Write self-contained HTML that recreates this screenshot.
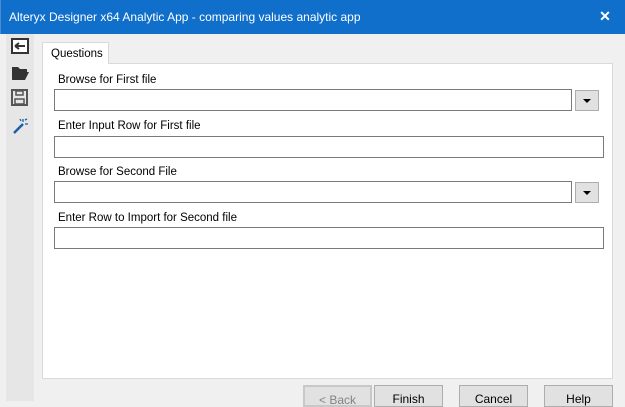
<!DOCTYPE html>
<html><head><style>
*{margin:0;padding:0;box-sizing:border-box}
body{width:625px;height:401px;overflow:hidden;background:#f0f0f0;font-family:"Liberation Sans",sans-serif;font-size:11px;color:#000;position:relative}
.title{position:absolute;left:0;top:0;width:625px;height:34px;background:#0f6fcb;color:#fff;font-size:12px;line-height:34px;padding-left:8px;border-left:1px solid #4a8ad0}
.x{position:absolute;right:0;top:0;width:40px;height:34px;text-align:center;font-weight:bold;font-size:14px;line-height:32px}
.side{position:absolute;left:6px;top:34px;width:28px;height:367px;background:#e6e6e6}
.ab{position:absolute}
.tab{position:absolute;left:42px;top:42px;width:67px;height:22px;background:#fff;border:1px solid #d9d9d9;border-bottom:none;padding:5px 0 0 8px;font-size:11.5px}
.panel{position:absolute;left:42px;top:63px;width:571px;height:316px;background:#fff;border:1px solid #d9d9d9}
.lbl{position:absolute;left:58px;font-size:11.5px}
.in{position:absolute;left:54px;height:22px;border:1px solid #7a7a7a;background:#fff}
.dd{position:absolute;left:575px;width:24px;height:21px;background:#e1e1e1;border:1px solid #adadad}
.dd:after{content:"";position:absolute;left:7px;top:8px;border-left:4px solid transparent;border-right:4px solid transparent;border-top:4px solid #000}
.btn{position:absolute;top:385px;width:69px;height:22px;background:#e1e1e1;border:1px solid #adadad;text-align:center;padding-top:6px;font-size:12px}
</style></head><body>
<div class="title">Alteryx Designer x64 Analytic App - comparing values analytic app<div class="x">✕</div></div>
<div class="side">
<svg class="ab" style="left:5px;top:4px" width="18" height="16"><rect x="1" y="1" width="16" height="14" fill="#fff" stroke="#333" stroke-width="2"/><path d="M4 8h10M4 8l4-3M4 8l4 3" stroke="#333" stroke-width="2" fill="none"/></svg>
<svg class="ab" style="left:5px;top:32px" width="18" height="14"><path d="M1 1h6l2 2h7v3H5l-4 8z" fill="#333"/><path d="M4 6h14l-4 8H1z" fill="#333"/></svg>
<svg class="ab" style="left:5px;top:55px" width="18" height="18"><rect x="1" y="1" width="15" height="15" fill="none" stroke="#555" stroke-width="2"/><rect x="5" y="2" width="7" height="4" fill="none" stroke="#555" stroke-width="1.5"/><rect x="4" y="10" width="9" height="5" fill="none" stroke="#555" stroke-width="1.5"/></svg>
<svg class="ab" style="left:6px;top:84px" width="16" height="16"><path d="M2 15l9-9" stroke="#1a5fa8" stroke-width="2.5"/><path d="M11 1v3M13 6h3M13 2l2-1M9 3l-1-2" stroke="#1a5fa8" stroke-width="1.3"/></svg>
</div>
<div class="panel"></div>
<div class="tab">Questions</div>
<div class="lbl" style="top:74px">Browse for First file</div>
<div class="in" style="top:89px;width:518px"></div><div class="dd" style="top:90px"></div>
<div class="lbl" style="top:120px">Enter Input Row for First file</div>
<div class="in" style="top:136px;width:550px"></div>
<div class="lbl" style="top:166px">Browse for Second File</div>
<div class="in" style="top:181px;width:518px"></div><div class="dd" style="top:182px"></div>
<div class="lbl" style="top:212px">Enter Row to Import for Second file</div>
<div class="in" style="top:227px;width:550px"></div>
<div class="btn" style="left:303px;color:#838383;border:2px solid #c8c8c8">&lt; Back</div>
<div class="btn" style="left:374px">Finish</div>
<div class="btn" style="left:459px">Cancel</div>
<div class="btn" style="left:544px">Help</div>
</body></html>
